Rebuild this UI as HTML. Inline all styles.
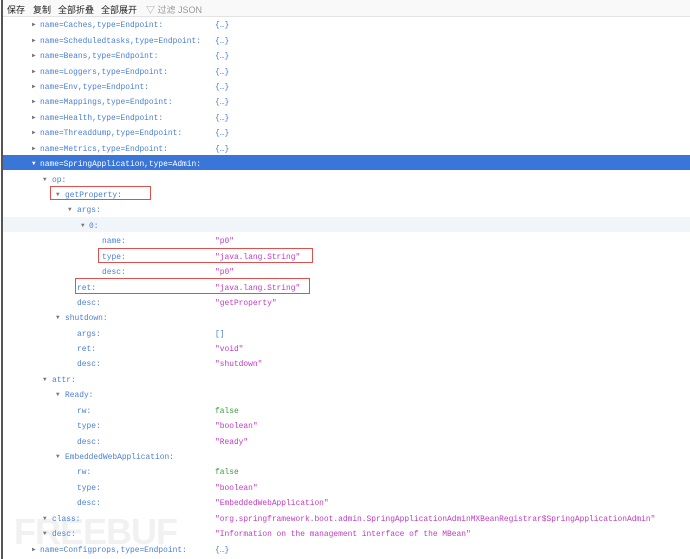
<!DOCTYPE html>
<html><head><meta charset="utf-8"><style>
body{margin:0;width:690px;height:559px;background:#fff;overflow:hidden;position:relative;font-family:"Liberation Mono",monospace;}
.lb{position:absolute;left:1px;top:0;width:2px;height:559px;background:#555;}
.tb{position:absolute;left:3px;top:0;width:687px;height:16px;border-bottom:1px solid #e3e3e3;background:#f9f9f9;font-family:"Liberation Sans","Noto Sans CJK SC",sans-serif;font-size:9px;color:#222;}
.tb span{position:absolute;top:3px;}
.r{position:absolute;left:3px;width:687px;height:15px;font-size:7.9px;line-height:15px;}
.k{position:absolute;top:2px;color:#4a7fd6;white-space:nowrap;}
.a{position:absolute;top:1px;color:#777;font-size:6px;line-height:15px;}
.v{position:absolute;top:2px;left:215px;white-space:nowrap;color:#4a7fd6;}
.s{color:#c23bc2;}
.g{color:#3f9a3f;}
.box{position:absolute;border:1.5px solid #e0504c;}
</style></head><body>
<div style="position:absolute;left:14px;top:510px;font-family:'Liberation Sans',sans-serif;font-size:36px;font-weight:bold;color:#f1f1f1;line-height:44px;letter-spacing:-1px;">FREEBUF</div>
<div class="lb"></div>
<div class="tb"><span style="left:4px">保存</span><span style="left:30px">复制</span><span style="left:55px">全部折叠</span><span style="left:98px">全部展开</span><span style="left:143px;color:#999">▽ 过滤 JSON</span></div>

<div class="r" style="top:16px"><span class="a" style="left:29px">▶</span><span class="k" style="left:37px">name=Caches,type=Endpoint:</span><span class="v" style="left:212px">{…}</span></div>
<div class="r" style="top:32px"><span class="a" style="left:29px">▶</span><span class="k" style="left:37px">name=Scheduledtasks,type=Endpoint:</span><span class="v" style="left:212px">{…}</span></div>
<div class="r" style="top:47px"><span class="a" style="left:29px">▶</span><span class="k" style="left:37px">name=Beans,type=Endpoint:</span><span class="v" style="left:212px">{…}</span></div>
<div class="r" style="top:63px"><span class="a" style="left:29px">▶</span><span class="k" style="left:37px">name=Loggers,type=Endpoint:</span><span class="v" style="left:212px">{…}</span></div>
<div class="r" style="top:78px"><span class="a" style="left:29px">▶</span><span class="k" style="left:37px">name=Env,type=Endpoint:</span><span class="v" style="left:212px">{…}</span></div>
<div class="r" style="top:93px"><span class="a" style="left:29px">▶</span><span class="k" style="left:37px">name=Mappings,type=Endpoint:</span><span class="v" style="left:212px">{…}</span></div>
<div class="r" style="top:109px"><span class="a" style="left:29px">▶</span><span class="k" style="left:37px">name=Health,type=Endpoint:</span><span class="v" style="left:212px">{…}</span></div>
<div class="r" style="top:124px"><span class="a" style="left:29px">▶</span><span class="k" style="left:37px">name=Threaddump,type=Endpoint:</span><span class="v" style="left:212px">{…}</span></div>
<div class="r" style="top:140px"><span class="a" style="left:29px">▶</span><span class="k" style="left:37px">name=Metrics,type=Endpoint:</span><span class="v" style="left:212px">{…}</span></div>
<div class="r" style="top:155px;background:#3a76d8"><span class="a" style="left:29px;color:#fff">▼</span><span class="k" style="left:37px;color:#fff">name=SpringApplication,type=Admin:</span></div>
<div class="r" style="top:171px"><span class="a" style="left:40px">▼</span><span class="k" style="left:49px">op:</span></div>
<div class="r" style="top:186px"><span class="a" style="left:53px">▼</span><span class="k" style="left:62px">getProperty:</span></div>
<div class="r" style="top:201px"><span class="a" style="left:65px">▼</span><span class="k" style="left:74px">args:</span></div>
<div class="r" style="top:217px;background:#f0f5fa"><span class="a" style="left:78px">▼</span><span class="k" style="left:86px">0:</span></div>
<div class="r" style="top:232px"><span class="k" style="left:99px">name:</span><span class="v s" style="left:212px">"p0"</span></div>
<div class="r" style="top:248px"><span class="k" style="left:99px">type:</span><span class="v s" style="left:212px">"java.lang.String"</span></div>
<div class="r" style="top:263px"><span class="k" style="left:99px">desc:</span><span class="v s" style="left:212px">"p0"</span></div>
<div class="r" style="top:279px"><span class="k" style="left:74px">ret:</span><span class="v s" style="left:212px">"java.lang.String"</span></div>
<div class="r" style="top:294px"><span class="k" style="left:74px">desc:</span><span class="v s" style="left:212px">"getProperty"</span></div>
<div class="r" style="top:309px"><span class="a" style="left:53px">▼</span><span class="k" style="left:62px">shutdown:</span></div>
<div class="r" style="top:325px"><span class="k" style="left:74px">args:</span><span class="v" style="left:212px">[]</span></div>
<div class="r" style="top:340px"><span class="k" style="left:74px">ret:</span><span class="v s" style="left:212px">"void"</span></div>
<div class="r" style="top:355px"><span class="k" style="left:74px">desc:</span><span class="v s" style="left:212px">"shutdown"</span></div>
<div class="r" style="top:371px"><span class="a" style="left:40px">▼</span><span class="k" style="left:49px">attr:</span></div>
<div class="r" style="top:386px"><span class="a" style="left:53px">▼</span><span class="k" style="left:62px">Ready:</span></div>
<div class="r" style="top:402px"><span class="k" style="left:74px">rw:</span><span class="v g" style="left:212px">false</span></div>
<div class="r" style="top:417px"><span class="k" style="left:74px">type:</span><span class="v s" style="left:212px">"boolean"</span></div>
<div class="r" style="top:433px"><span class="k" style="left:74px">desc:</span><span class="v s" style="left:212px">"Ready"</span></div>
<div class="r" style="top:448px"><span class="a" style="left:53px">▼</span><span class="k" style="left:62px">EmbeddedWebApplication:</span></div>
<div class="r" style="top:463px"><span class="k" style="left:74px">rw:</span><span class="v g" style="left:212px">false</span></div>
<div class="r" style="top:479px"><span class="k" style="left:74px">type:</span><span class="v s" style="left:212px">"boolean"</span></div>
<div class="r" style="top:494px"><span class="k" style="left:74px">desc:</span><span class="v s" style="left:212px">"EmbeddedWebApplication"</span></div>
<div class="r" style="top:510px"><span class="a" style="left:40px">▼</span><span class="k" style="left:49px">class:</span><span class="v s" style="left:212px">"org.springframework.boot.admin.SpringApplicationAdminMXBeanRegistrar$SpringApplicationAdmin"</span></div>
<div class="r" style="top:525px"><span class="a" style="left:40px">▼</span><span class="k" style="left:49px">desc:</span><span class="v s" style="left:212px">"Information on the management interface of the MBean"</span></div>
<div class="r" style="top:541px"><span class="a" style="left:29px">▶</span><span class="k" style="left:37px">name=Configprops,type=Endpoint:</span><span class="v" style="left:212px">{…}</span></div>

<div class="box" style="left:50px;top:186px;width:99px;height:12px"></div>
<div class="box" style="left:98px;top:248px;width:213px;height:13px"></div>
<div class="box" style="left:75px;top:278px;width:233px;height:14px"></div>
</body></html>
